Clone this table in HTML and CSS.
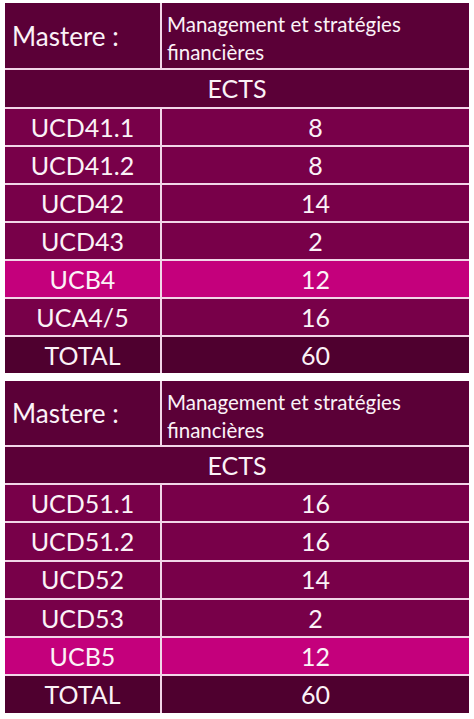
FILE: index.html
```html
<!DOCTYPE html>
<html lang="fr">
<head>
<meta charset="utf-8">
<title>Mastere – ECTS</title>
<link rel="stylesheet" href="styles.css">
</head>
<body>
<div class="page">
  <div class="grid grid-first">
    <div class="cell dark label">Mastere :</div>
    <div class="cell dark title">Management et stratégies financières</div>
    <div class="cell dark span">ECTS</div>
    <div class="cell ucd">UCD41.1</div><div class="cell ucd">8</div>
    <div class="cell ucd">UCD41.2</div><div class="cell ucd">8</div>
    <div class="cell ucd">UCD42</div><div class="cell ucd">14</div>
    <div class="cell ucd">UCD43</div><div class="cell ucd">2</div>
    <div class="cell ucb">UCB4</div><div class="cell ucb">12</div>
    <div class="cell ucd">UCA4/5</div><div class="cell ucd">16</div>
    <div class="cell total">TOTAL</div><div class="cell total">60</div>
  </div>
  <div class="grid grid-second">
    <div class="cell dark label">Mastere :</div>
    <div class="cell dark title">Management et stratégies financières</div>
    <div class="cell dark span">ECTS</div>
    <div class="cell ucd">UCD51.1</div><div class="cell ucd">16</div>
    <div class="cell ucd">UCD51.2</div><div class="cell ucd">16</div>
    <div class="cell ucd">UCD52</div><div class="cell ucd">14</div>
    <div class="cell ucd">UCD53</div><div class="cell ucd">2</div>
    <div class="cell ucb">UCB5</div><div class="cell ucb">12</div>
    <div class="cell total">TOTAL</div><div class="cell total">60</div>
  </div>
</div>
</body>
</html>
```
FILE: styles.css
```css
html, body {
  margin: 0;
  background: #ffffff;
}
.page {
  padding: 3px 5px 0 5px;
  width: 464px;
  display: flex;
  flex-direction: column;
  gap: 8px;
  font-family: Lato, "Open Sans", sans-serif;
  color: #fbf2f7;
}
.grid {
  display: grid;
  grid-template-columns: 155px 1fr;
  gap: 2px;
  background: #f2d6e8;
}
.grid-first {
  grid-template-rows: 65px 37px repeat(7, 36px);
}
.grid-second {
  grid-template-rows: 64px 36px repeat(6, 36.3px);
}
.cell {
  display: flex;
  align-items: center;
  justify-content: center;
  font-size: 25px;
  line-height: 1;
  min-width: 0;
}
.label {
  justify-content: flex-start;
  padding-left: 7px;
  font-size: 26px;
}
.title {
  justify-content: flex-start;
  align-items: flex-start;
  padding: 7px 30px 0 5px;
  font-size: 20.5px;
  line-height: 28px;
}
.span {
  grid-column: 1 / 3;
}
.dark { background: #5b0037; }
.ucd { background: #780049; }
.ucb { background: #c4007c; }
.total { background: #4f002f; }
```
